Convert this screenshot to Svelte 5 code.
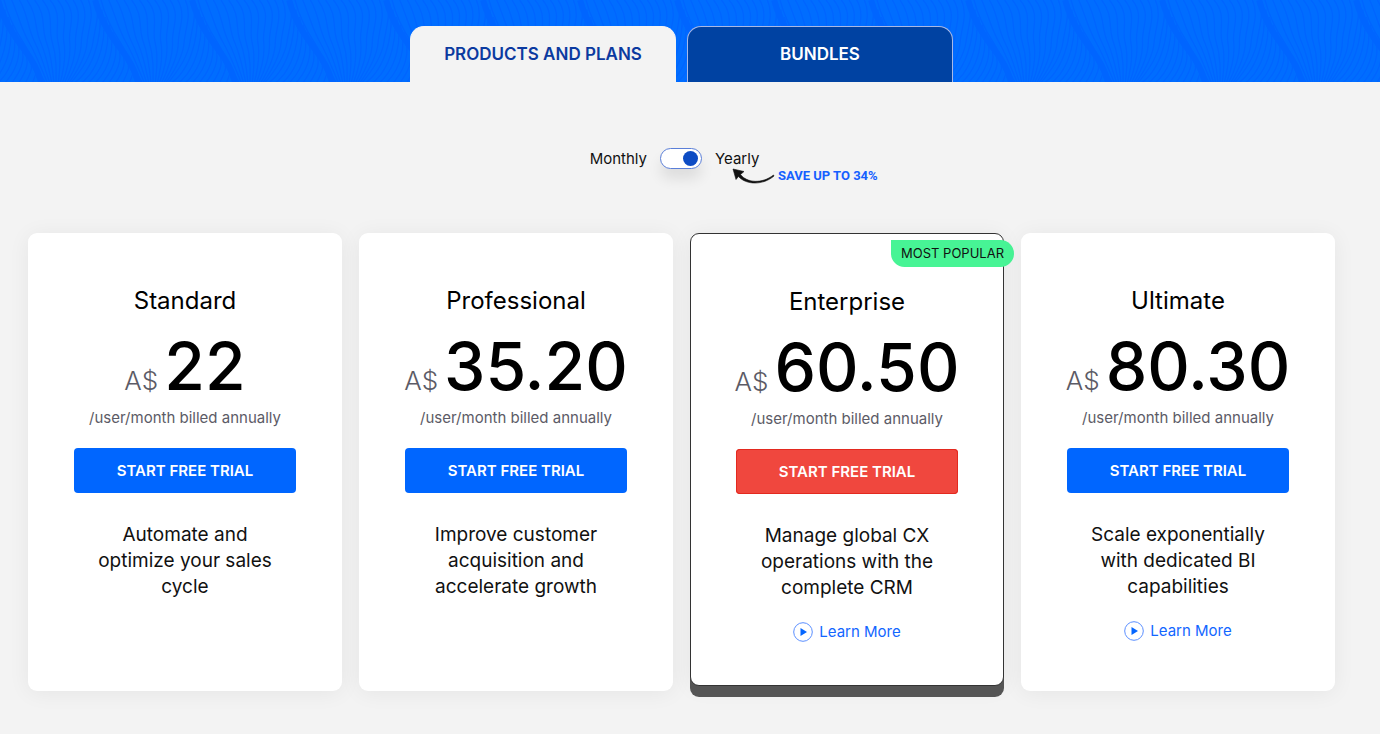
<script lang="ts">
  type Plan = { name: string; price: string; blurb: string; popular?: boolean; more?: boolean };

  const plans: Plan[] = [
    { name: 'Standard', price: '22', blurb: 'Automate and optimize your sales cycle' },
    { name: 'Professional', price: '35.20', blurb: 'Improve customer acquisition and accelerate growth' },
    { name: 'Enterprise', price: '60.50', blurb: 'Manage global CX operations with the complete CRM', popular: true, more: true },
    { name: 'Ultimate', price: '80.30', blurb: 'Scale exponentially with dedicated BI capabilities', more: true },
  ];

  let tab = $state('plans');
  let yearly = $state(true);

  // Header texture: strands fan out from the left edge of a tile and meet at its foot
  const strands = Array.from({ length: 13 }, (_, i) => {
    const t = i / 12;
    const top = 4 + 92 * t;
    const mid = 23 + 70 * t;
    const low = 46 + 24 * t;
    const lean = 9 - 11 * t;
    const topLean = 4 + 36 * t * (1 - t);
    return `M${top} 0C${top + topLean} 15 ${mid - lean} 28 ${mid} 42S${low - 8 + 20 * t} 70 ${low} 84`;
  });

  // Shorter strands peel off the next bundle and curl back down
  const curls = Array.from({ length: 9 }, (_, i) => {
    const t = i / 8;
    const x = 98 + 30 * t;
    const y = 2 + 60 * t;
    const foot = 73 + 56 * t;
    return `M${x} ${y}C${x + 6} ${y + 24 - 12 * t} ${foot + 24 - 18 * t} 68 ${foot} 84`;
  });
</script>

<div class="page">
  <header>
    <svg class="texture" aria-hidden="true">
      <defs>
        <pattern id="waves" width="97" height="84" patternUnits="userSpaceOnUse">
          {#each [-97, 0] as dx}
            <g transform="translate({dx})" fill="none" stroke="#0065ff" stroke-width="1.4">
              {#each strands as d}<path {d} />{/each}
              {#each curls as d}<path {d} />{/each}
              <path d="M-2 0C4 22 14 36 26 52S38 74 42 84M95 0C101 22 111 36 123 52S135 74 139 84" stroke-width="6" />
            </g>
          {/each}
        </pattern>
      </defs>
      <rect width="100%" height="100%" fill="url(#waves)" />
    </svg>
    <nav class="tabs">
      <button class="tab" class:active={tab === 'plans'} onclick={() => (tab = 'plans')}>PRODUCTS AND PLANS</button>
      <button class="tab" class:active={tab === 'bundles'} onclick={() => (tab = 'bundles')}>BUNDLES</button>
    </nav>
  </header>

  <main>
    <div class="billing">
      <label for="period">Monthly</label>
      <input id="period" type="checkbox" role="switch" bind:checked={yearly} />
      <label class="yearly" for="period">
        Yearly
        <span class="save">
          <svg width="44" height="18" viewBox="0 0 44 18" aria-hidden="true">
            <path d="M1 2L12 4.500L8.500 7.500C15 16 30 17 41.500 8L42 9C31 18.500 14 18 6.500 9.500L4 12.500Z" fill="#111" stroke="#111" stroke-width=".6" stroke-linejoin="round" />
          </svg>
          SAVE UP TO 34%
        </span>
      </label>
    </div>

    <div class="plans">
      {#each plans as plan}
        <section class="card" class:popular={plan.popular}>
          {#if plan.popular}<span class="badge">MOST POPULAR</span>{/if}
          <h2>{plan.name}</h2>
          <p class="price"><span class="currency">A$</span><span class="amount">{plan.price}</span></p>
          <p class="term">/user/month billed annually</p>
          <button class="trial">START FREE TRIAL</button>
          <p class="blurb">{plan.blurb}</p>
          {#if plan.more}
            <a class="more" href="#{plan.name.toLowerCase()}">
              <svg width="20" height="20" viewBox="0 0 20 20" aria-hidden="true">
                <circle cx="10" cy="10" r="9.300" fill="none" stroke="#5b8fff" />
                <path d="M7.500 6L14 10L7.500 14Z" fill="#0566ff" />
              </svg>
              Learn More
            </a>
          {/if}
        </section>
      {/each}
    </div>
  </main>
</div>

<style>
  :global(body) {
    margin: 0;
    background: #f3f3f3;
  }

  .page {
    font-family: Inter, "Liberation Sans", sans-serif;
    color: #111;
  }

  header {
    position: relative;
    background: #006dff;
    padding: 26px 17px 0 0;
  }

  .texture {
    position: absolute;
    inset: 0;
    width: 100%;
    height: 100%;
  }

  .tabs {
    position: relative;
    display: flex;
    justify-content: center;
    gap: 11px;
  }

  .tab {
    box-sizing: border-box;
    width: 266px;
    height: 56px;
    padding: 0 0 2px;
    border: 1px solid #a9b9e6;
    border-bottom: 0;
    border-radius: 14px 14px 0 0;
    background: #0042a2;
    color: #fff;
    font: 600 17px/24px Inter, "Liberation Sans", sans-serif;
    cursor: pointer;
  }

  .tab.active {
    background: #f3f3f3;
    border-color: #f3f3f3;
    color: #0b3aa0;
  }

  main {
    padding: 63px 45px 37px 28px;
  }

  .billing {
    display: flex;
    justify-content: center;
    align-items: center;
    gap: 13px;
    height: 26px;
    padding-right: 14px;
    font-size: 15px;
  }

  .billing input {
    appearance: none;
    box-sizing: border-box;
    width: 42px;
    height: 21px;
    margin: 0;
    padding: 2px 3px;
    border: 1px solid #5b7fd8;
    border-radius: 11px;
    background: #fff;
    box-shadow: 0 10px 14px rgba(0, 0, 0, 0.09);
    cursor: pointer;
  }

  .billing input::before {
    content: "";
    display: block;
    width: 15px;
    height: 15px;
    border-radius: 50%;
    background: #0d4cc4;
  }

  .billing input:checked::before {
    margin-left: auto;
  }

  .yearly {
    position: relative;
  }

  .save {
    position: absolute;
    top: 18px;
    left: 17px;
    display: flex;
    align-items: center;
    gap: 2px;
    color: #1560ff;
    font: 700 13px/18px Roboto, sans-serif;
    white-space: nowrap;
  }

  .plans {
    display: grid;
    grid-template-columns: repeat(4, minmax(0, 1fr));
    gap: 17px;
    margin-top: 62px;
  }

  .card {
    position: relative;
    box-sizing: border-box;
    display: flex;
    flex-direction: column;
    align-items: center;
    min-height: 458px;
    padding: 52px 46px 46px;
    border-radius: 9px;
    background: #fff;
    box-shadow: 0 2px 22px rgba(0, 0, 0, 0.06);
    text-align: center;
  }

  .card.popular {
    margin-bottom: 5px;
    min-height: 453px;
    padding: 52px 45px 40px;
    border: 1px solid #333;
    box-shadow: 0 11px 0 #555, 0 2px 22px rgba(0, 0, 0, 0.06);
  }

  .badge {
    position: absolute;
    top: 6px;
    right: -11px;
    padding: 0 10px;
    border-radius: 0 14px 14px 14px;
    background: #47f495;
    font-size: 13px;
    line-height: 27px;
  }

  h2 {
    margin: 0;
    color: #000;
    font-size: 24px;
    font-weight: 400;
    line-height: 32px;
  }

  .price {
    display: flex;
    align-items: baseline;
    gap: 6px;
    margin: 9px 0 0;
    line-height: 80px;
  }

  .currency {
    color: #5c5b66;
    font-size: 26px;
    font-weight: 300;
    line-height: 32px;
  }

  .amount {
    color: #000;
    font-size: 66px;
    font-weight: 500;
  }

  .term {
    margin: 0;
    color: #5c5b66;
    font-size: 15px;
    line-height: 24px;
  }

  .trial {
    width: 100%;
    height: 45px;
    margin-top: 18px;
    padding: 0;
    border: 0;
    border-radius: 4px;
    background: #0066ff;
    color: #fff;
    font: 600 15px/24px Inter, "Liberation Sans", sans-serif;
    cursor: pointer;
  }

  .popular .trial {
    background: #f0473e;
    box-shadow: inset 0 0 0 1px #e3291f;
  }

  .blurb {
    max-width: 190px;
    margin: 29px 0 0;
    font-size: 19px;
    line-height: 26px;
  }

  .more {
    display: flex;
    align-items: center;
    gap: 6px;
    margin-top: 19px;
    color: #1266ff;
    font-size: 15px;
    line-height: 24px;
    text-decoration: none;
  }
</style>
